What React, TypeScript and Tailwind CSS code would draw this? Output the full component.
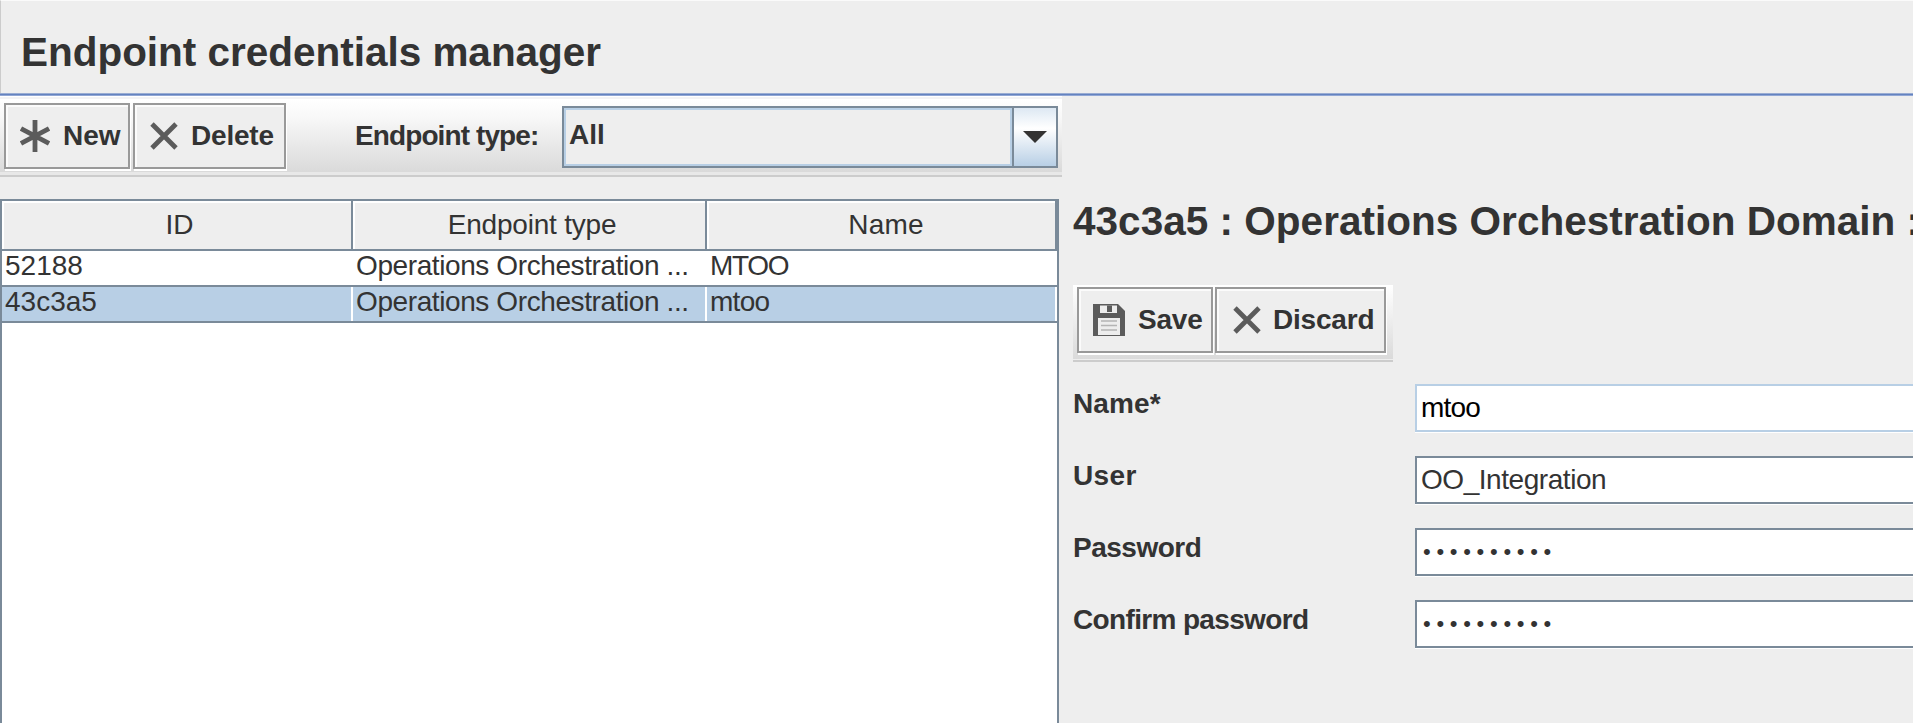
import type { ReactNode } from "react";

type Row = {
  id: string;
  type: string;
  name: string;
  nameClass: string;
  selected?: boolean;
}

type Field = {
  label: string;
  labelClass: string;
  value: string;
  valueClass: string;
  focused?: boolean;
}

const rows: Row[] = [
  { id: "52188", type: "Operations Orchestration ...", name: "MTOO", nameClass: "tracking-[-1.3px]" },
  { id: "43c3a5", type: "Operations Orchestration ...", name: "mtoo", nameClass: "tracking-[-0.7px]", selected: true },
];

const fields: Field[] = [
  { label: "Name*", labelClass: "tracking-[0.1px]", value: "mtoo", valueClass: "text-black tracking-[-0.8px]", focused: true },
  { label: "User", labelClass: "tracking-[0.4px]", value: "OO_Integration", valueClass: "tracking-[-0.45px]" },
  { label: "Password", labelClass: "tracking-[-0.5px]", value: "••••••••••", valueClass: "text-[22px] tracking-[5.7px] pl-[2px]" },
  { label: "Confirm password", labelClass: "tracking-[-0.65px]", value: "••••••••••", valueClass: "text-[22px] tracking-[5.7px] pl-[2px]" },
];

function NewIcon() {
  return (
    <svg width="30" height="32" viewBox="0 0 30 32" stroke="#5b5b5b" strokeWidth="4.8">
      <path d="M15 0V32M1 8.500L29 23.500M29 8.500L1 23.500" />
    </svg>
  );
}

function CrossIcon() {
  return (
    <svg width="28" height="28" viewBox="0 0 28 28" stroke="#5b5b5b" strokeWidth="4.8">
      <path d="M2 2L26 26M26 2L2 26" />
    </svg>
  );
}

function SaveIcon() {
  return (
    <svg width="32" height="32" viewBox="0 0 32 32">
      <path d="M0 0H25L32 7V32H0Z" fill="#5b5b5b" />
      <path d="M7 1.500H24V9H7Z" fill="#ededed" />
      <path d="M14 1.500H19V8H14Z" fill="#5b5b5b" />
      <path d="M5 14H27V31H5Z" fill="#ededed" />
      <path d="M8 17H24M8 21.500H24M8 26H24" stroke="#b4b4b4" strokeWidth="1.600" />
    </svg>
  );
}

function ToolButton({ className, children }: { className: string; children: ReactNode }) {
  return (
    <button className={`flex items-center h-[66px] shrink-0 border-2 border-[#999] bg-[#eee] font-bold shadow-[inset_2px_2px_0_#fbfbfb,1px_2px_0_#fff] ${className}`}>
      {children}
    </button>
  );
}

export default function App() {
  return (
    <div className="w-full h-[723px] overflow-hidden bg-[#eee] text-[#333] text-[28px] leading-[30px] whitespace-nowrap font-['Liberation_Sans',Arial,sans-serif]">
      <header className="flex items-center h-[93px] pl-[20px] pt-[9px] border-t border-l border-t-[#fafafa] border-l-[#ccc]">
        <h1 className="text-[40.5px] tracking-[-0.02px] font-bold">Endpoint credentials manager</h1>
      </header>
      <div className="h-[3px] bg-linear-to-b from-[#b5c1dc] via-[#6382bf] to-[#a9b9e0]" />

      <div className="flex h-[627px]">
        <section className="flex flex-col w-[1062px] shrink-0">
          <div className="h-[3px] bg-[#f3f3f5] border-t border-white" />
          <div className="flex items-center h-[73px] pl-1 shrink-0 bg-linear-to-b from-white via-[#f8f8f8] via-25% to-[#dadada]">
            <ToolButton className="w-[126px] pl-[14px]">
              <NewIcon />
              <span className="pl-[13px]">New</span>
            </ToolButton>
            <ToolButton className="w-[153px] ml-[3px] pl-[15px]">
              <CrossIcon />
              <span className="pl-[13px] tracking-[-0.2px]">Delete</span>
            </ToolButton>
            <span className="w-[207px] ml-[69px] font-bold tracking-[-0.9px]">Endpoint type:</span>
            <div className="flex h-[62px] w-[496px] mt-[2px] border-2 border-[#7a8a99]">
              <div className="flex items-center flex-1 pl-[3px] pb-[3px] bg-[#eee] border-2 border-[#b8cfe5] font-bold">All</div>
              <div className="flex items-center justify-center w-[44px] border-l-2 border-[#7a8a99] bg-linear-to-b from-[#dde8f3] via-white via-35% to-[#b8cfe5]">
                <svg width="24" height="12" viewBox="0 0 24 12">
                  <path d="M0 0H24L12 12Z" fill="#333" />
                </svg>
              </div>
            </div>
          </div>
          <div className="h-[5px] shrink-0 bg-[#e8e8e8] border-b-2 border-[#ccc]" />

          <div className="flex flex-col flex-1 w-[1059px] mt-[22px] border-2 border-b-0 border-[#7a8a99] bg-white">
            <div className="grid grid-cols-[351px_354px_350px] h-[50px] shrink-0 border-b-2 border-[#7a8a99] bg-[#eee] text-center leading-[48px]">
              <div className="border-r-2 border-[#7a8a99] shadow-[inset_2px_2px_0_#fff] pl-[6px]">ID</div>
              <div className="border-r-2 border-[#7a8a99] shadow-[inset_2px_2px_0_#fff] pl-[6px] tracking-[-0.2px]">Endpoint type</div>
              <div className="border-r-2 border-[#7a8a99] shadow-[inset_2px_2px_0_#fff] pl-[10px] tracking-[0.2px]">Name</div>
            </div>
            {rows.map((row) => (
              <div
                key={row.id}
                className={`grid grid-cols-[349px_352px_348px] gap-x-[2px] h-9 shrink-0 border-b-2 border-[#7a8a99] ${row.selected ? "*:bg-[#b8cfe5]" : ""}`}
              >
                <div className="pl-[3px]">{row.id}</div>
                <div className="pl-[3px] tracking-[-0.4px]">{row.type}</div>
                <div className={`pl-[3px] ${row.nameClass}`}>{row.name}</div>
              </div>
            ))}
          </div>
        </section>

        <section className="flex-1 min-w-0 pl-[11px] overflow-hidden">
          <h2 className="mt-[110px] text-[40.5px] tracking-[0.02px] font-bold">43c3a5 : Operations Orchestration Domain :</h2>
          <div className="flex w-[320px] h-[74px] mt-[49px] pl-[4px] pt-[2px] bg-linear-to-b from-white to-[#dadada]">
            <ToolButton className="w-[136px] pl-[14px]">
              <SaveIcon />
              <span className="pl-[13px] tracking-[-0.2px]">Save</span>
            </ToolButton>
            <ToolButton className="w-[171px] ml-[2px] pl-[16px]">
              <CrossIcon />
              <span className="pl-[12px] tracking-[-0.2px]">Discard</span>
            </ToolButton>
          </div>
          <div className="w-[320px] h-[3px] border-b-2 border-[#ccc]" />

          <div className="flex flex-col gap-[24px] mt-[22px]">
            {fields.map((field) => (
              <div key={field.label} className="flex h-[48px]">
                <label className={`w-[342px] shrink-0 mt-[5px] font-bold ${field.labelClass}`}>{field.label}</label>
                <div className={`flex items-center flex-1 pl-[4px] bg-white border-2 border-r-0 shadow-[0_1px_0_#fff] ${field.focused ? "border-[#b8cfe5]" : "border-[#7a8a99]"}`}>
                  <span className={field.valueClass}>{field.value}</span>
                </div>
              </div>
            ))}
          </div>
        </section>
      </div>
    </div>
  );
}
